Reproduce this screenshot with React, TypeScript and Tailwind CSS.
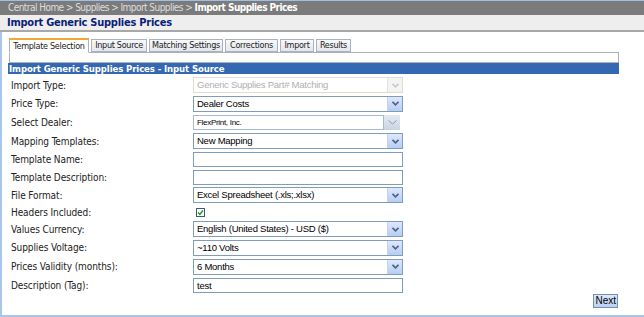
import React from "react";

const Arrow = ({ disabled = false }: { disabled?: boolean }) => (
  <div
    className={
      disabled
        ? "w-[15px] h-full flex items-center justify-center bg-[#f4f4f4] border-l border-[#e2e2e2]"
        : "w-[15px] h-full flex items-center justify-center bg-gradient-to-b from-[#dde8fb] to-[#b6cdf5] border-l border-[#c3d3ef]"
    }
  >
    <svg width="7" height="5" viewBox="0 0 7 5">
      <path
        d="M0.5 0.8 L3.5 3.8 L6.5 0.8"
        fill="none"
        stroke={disabled ? "#c8c8c8" : "#4d6185"}
        strokeWidth="1.6"
      />
    </svg>
  </div>
);

const Select = ({ value, disabled = false }: { value: string; disabled?: boolean }) => (
  <div
    className={
      "w-[210px] h-[16px] flex items-stretch border " +
      (disabled ? "border-[#e0ddd0] bg-white" : "border-[#7f9db9] bg-white")
    }
  >
    <div
      className={
        "flex-1 pl-[3px] text-[9.5px] leading-[14px] tracking-[-0.25px] font-['Liberation_Sans',Arial,sans-serif] " +
        (disabled ? "text-[#b0b0b0]" : "text-black")
      }
    >
      {value}
    </div>
    <Arrow disabled={disabled} />
  </div>
);

const Input = ({ value = "" }: { value?: string }) => (
  <div className="w-[210px] h-[15px] border border-[#7f9db9] bg-white pl-[3px] text-[9.5px] leading-[13px] tracking-[-0.25px] font-['Liberation_Sans',Arial,sans-serif] text-black">
    {value}
  </div>
);

const Combo = () => (
  <div className="flex items-stretch h-[15px]">
    <div className="w-[191px] border border-[#a5b9d8] bg-white pl-[3px] text-[8px] leading-[13px] tracking-[-0.3px] font-['Liberation_Sans',Arial,sans-serif] text-black">
      FlexPrint, Inc.
    </div>
    <div className="w-[16px] bg-gradient-to-b from-[#e4eaf2] to-[#c9d4e2] flex items-center justify-center">
      <svg width="9" height="5" viewBox="0 0 9 5">
        <path d="M0.5 0.5 L4.5 4 L8.5 0.5" fill="none" stroke="#8a9bb2" strokeWidth="1" />
      </svg>
    </div>
  </div>
);

const Row = ({ label, h, children }: { label: string; h: number; children: React.ReactNode }) => (
  <div className="flex items-center" style={{ height: h }}>
    <div className="w-[185px] pl-[3px] text-[10px] tracking-[-0.1px] text-[#222] whitespace-nowrap">{label}</div>
    <div>{children}</div>
  </div>
);

const tabs: { t: string; w: number }[] = [
  { t: "Template Selection", w: 80 },
  { t: "Input Source", w: 56 },
  { t: "Matching Settings", w: 74 },
  { t: "Corrections", w: 53 },
  { t: "Import", w: 34 },
  { t: "Results", w: 35 },
];

export default function App() {
  return (
    <div className="w-[644px] h-[317px] bg-white overflow-hidden flex flex-col font-['DejaVu_Sans_Condensed','DejaVu_Sans',Verdana,sans-serif]">
      <div className="h-[15px] bg-[#7b7b7b] border-t border-[#9fbfe6] px-[8px] text-[10px] leading-[13px] text-[#dedede] whitespace-nowrap tracking-[-0.55px]">
        Central Home &gt; Supplies &gt; Import Supplies &gt; <span className="font-bold text-white">Import Supplies Prices</span>
      </div>
      <div className="h-[17px] bg-[#eeeeee] border-b-2 border-[#a8a8a8] px-[7px] text-[11px] leading-[15px] font-bold text-[#0a1e78] whitespace-nowrap tracking-[-0.25px]">
        Import Generic Supplies Prices
      </div>
      <div className="flex-1 border-l-2 border-b-2 border-[#a9c6ea] pl-[6px] pr-[25px] pt-[6px] flex flex-col">
        <div className="flex items-end gap-[2px] pl-[1px] h-[14px]">
          {tabs.map(({ t, w }, i) =>
            i === 0 ? (
              <div
                key={t}
                style={{ width: w }}
                className="h-[15px] -mb-px border border-[#aab2bd] border-t-2 border-t-[#f2a933] border-b-white bg-white text-[9px] tracking-[-0.3px] leading-[12px] text-[#222] relative z-10 whitespace-nowrap text-center"
              >
                {t}
              </div>
            ) : (
              <div
                key={t}
                style={{ width: w }}
                className="h-[13px] border border-[#aab2bd] bg-gradient-to-b from-[#f7f8fa] to-[#e4e7ec] text-[9px] tracking-[-0.3px] leading-[11px] text-[#222] whitespace-nowrap text-center"
              >
                {t}
              </div>
            )
          )}
        </div>
        <div className="ml-[1px] h-[11px] border border-[#aab2bd] bg-white" />
        <div className="h-[11px] bg-[#3568b3] text-white font-bold text-[9.5px] leading-[11px] tracking-[-0.1px] pl-[1px] whitespace-nowrap">
          Import Generic Supplies Prices - Input Source
        </div>
        <div className="pt-[2px] flex flex-col">
          <Row label="Import Type:" h={18}>
            <Select value="Generic Supplies Part# Matching" disabled />
          </Row>
          <Row label="Price Type:" h={19}>
            <Select value="Dealer Costs" />
          </Row>
          <Row label="Select Dealer:" h={19}>
            <Combo />
          </Row>
          <Row label="Mapping Templates:" h={18}>
            <Select value="New Mapping" />
          </Row>
          <Row label="Template Name:" h={18}>
            <Input />
          </Row>
          <Row label="Template Description:" h={18}>
            <Input />
          </Row>
          <Row label="File Format:" h={18}>
            <Select value="Excel Spreadsheet (.xls;.xlsx)" />
          </Row>
          <Row label="Headers Included:" h={16}>
            <div className="ml-[3px] w-[9px] h-[9px] border border-[#3c5a7e] bg-white flex items-center justify-center">
              <svg width="7" height="7" viewBox="0 0 7 7">
                <path d="M1 3.5 L2.8 5.3 L6 1.5" fill="none" stroke="#22a020" strokeWidth="1.5" />
              </svg>
            </div>
          </Row>
          <Row label="Values Currency:" h={18}>
            <Select value="English (United States) - USD ($)" />
          </Row>
          <Row label="Supplies Voltage:" h={19}>
            <Select value="~110 Volts" />
          </Row>
          <Row label="Prices Validity (months):" h={19}>
            <Select value="6 Months" />
          </Row>
          <Row label="Description (Tag):" h={19}>
            <Input value="test" />
          </Row>
        </div>
        <div className="flex justify-end pr-[1px] -mt-[1px]">
          <div className="h-[14px] px-[1px] border border-[#7890b0] bg-gradient-to-b from-[#dbe8fa] to-[#b9d1f3] text-[10px] leading-[12px] font-['Liberation_Sans',Arial,sans-serif] text-black">
            Next
          </div>
        </div>
      </div>
    </div>
  );
}
